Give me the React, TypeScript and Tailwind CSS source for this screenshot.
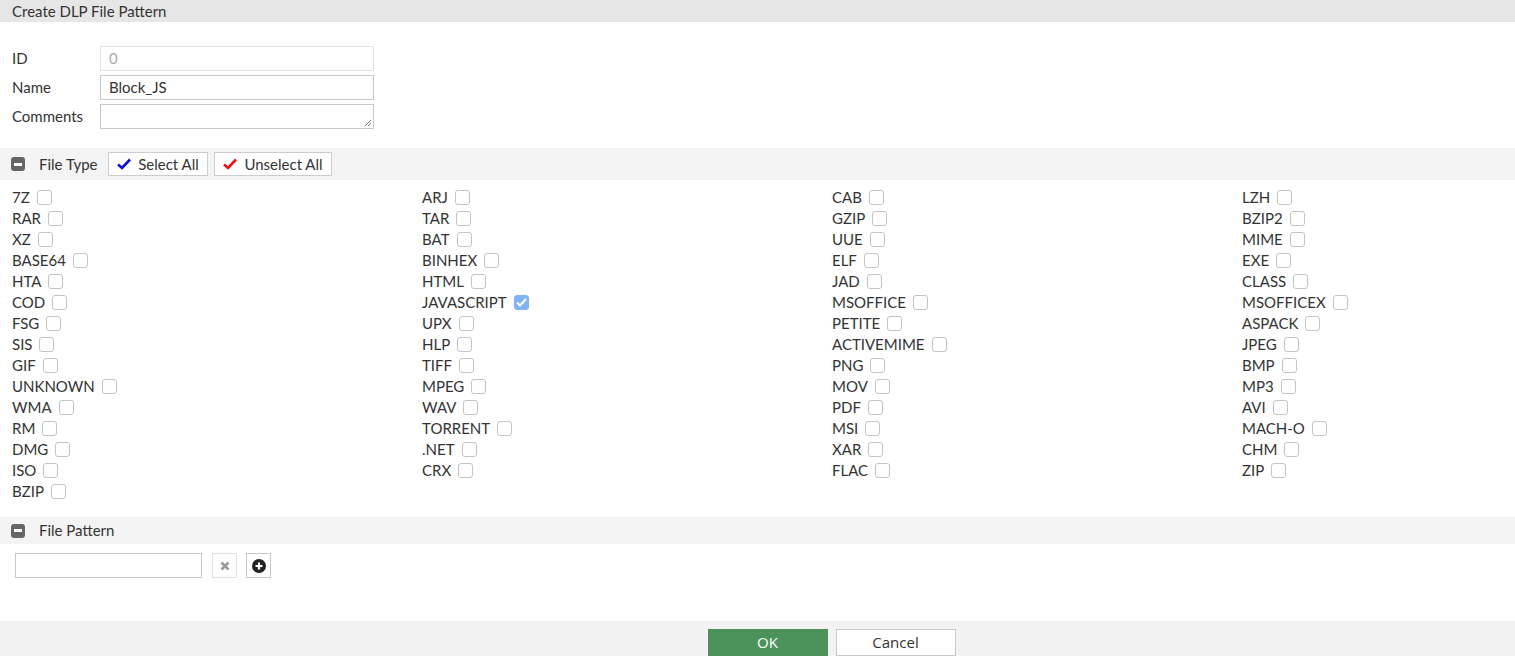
import { useState } from "react";

const fileTypes = [
  "7Z", "ARJ", "CAB", "LZH",
  "RAR", "TAR", "GZIP", "BZIP2",
  "XZ", "BAT", "UUE", "MIME",
  "BASE64", "BINHEX", "ELF", "EXE",
  "HTA", "HTML", "JAD", "CLASS",
  "COD", "JAVASCRIPT", "MSOFFICE", "MSOFFICEX",
  "FSG", "UPX", "PETITE", "ASPACK",
  "SIS", "HLP", "ACTIVEMIME", "JPEG",
  "GIF", "TIFF", "PNG", "BMP",
  "UNKNOWN", "MPEG", "MOV", "MP3",
  "WMA", "WAV", "PDF", "AVI",
  "RM", "TORRENT", "MSI", "MACH-O",
  "DMG", ".NET", "XAR", "CHM",
  "ISO", "CRX", "FLAC", "ZIP",
  "BZIP",
];

function MinusIcon() {
  return (
    <span className="w-[14px] h-[14px] rounded-[3px] bg-[#666] flex items-center justify-center shrink-0">
      <span className="w-[8px] h-[3px] bg-white" />
    </span>
  );
}

function Check({ color }: { color: string }) {
  return (
    <svg width="14" height="12" viewBox="0 0 14 12">
      <path d="M1 6.5 L5 10 L13 1.5" fill="none" stroke={color} strokeWidth="2.6" strokeLinejoin="miter" />
    </svg>
  );
}

function Box({ checked, onClick }: { checked: boolean; onClick: () => void }) {
  return (
    <span
      onClick={onClick}
      className={
        checked
          ? "w-[15px] h-[15px] rounded-[3px] bg-[#7fb5f5] border border-[#7fb5f5] flex items-center justify-center"
          : "w-[15px] h-[15px] rounded-[3px] bg-white border border-[#c4c4c4]"
      }
    >
      {checked && (
        <svg width="11" height="9" viewBox="0 0 11 9">
          <path d="M1 4.5 L4 7.5 L10 1" fill="none" stroke="white" strokeWidth="2" />
        </svg>
      )}
    </span>
  );
}

export default function App() {
  const [checked, setChecked] = useState<string[]>(["JAVASCRIPT"]);
  const toggle = (t: string) =>
    setChecked((c) => (c.includes(t) ? c.filter((x) => x !== t) : [...c, t]));

  return (
    <div className="h-[656px] flex flex-col bg-white text-[#333] text-[15px] font-['Lato','Liberation_Sans',sans-serif] overflow-hidden">
      {/* title */}
      <div className="h-[22px] bg-[#e6e6e6] px-3 flex items-center text-[#333] leading-none">
        Create DLP File Pattern
      </div>

      <div className="flex-1">
        {/* form */}
        <div className="pt-[24px] px-3 flex flex-col gap-[4px]">
          <div className="flex items-center">
            <span className="w-[88px]">ID</span>
            <div className="w-[274px] h-[25px] border border-[#e4e4e4] px-2 flex items-center text-[#aaa]">0</div>
          </div>
          <div className="flex items-center">
            <span className="w-[88px]">Name</span>
            <div className="w-[274px] h-[25px] border border-[#c8c8c8] px-2 flex items-center">Block_JS</div>
          </div>
          <div className="flex items-center">
            <span className="w-[88px]">Comments</span>
            <div className="w-[274px] h-[25px] border border-[#c8c8c8] relative">
              <svg className="absolute right-[1px] bottom-[1px]" width="8" height="8" viewBox="0 0 8 8">
                <path d="M7 1 L1 7 M7 4 L4 7" stroke="#777" strokeWidth="1" />
              </svg>
            </div>
          </div>
        </div>

        {/* file type */}
        <div className="mt-[19px] h-[32px] bg-[#f4f4f4] pl-[11px] flex items-center">
          <MinusIcon />
          <span className="ml-[14px] w-[69px] whitespace-nowrap">File Type</span>
          <button className="h-[24px] w-[100px] bg-white border border-[#ccc] flex items-center justify-center gap-[7px]">
            <Check color="#0b0be6" />
            <span>Select All</span>
          </button>
          <button className="ml-[6px] h-[24px] w-[118px] bg-white border border-[#ccc] flex items-center justify-center gap-[7px]">
            <Check color="#ee1111" />
            <span>Unselect All</span>
          </button>
        </div>

        <div className="pt-[7px] px-3 grid grid-cols-[repeat(4,410px)]">
          {fileTypes.map((t) => (
            <div key={t} className="h-[21px] flex items-center gap-[7px]">
              <span>{t}</span>
              <Box checked={checked.includes(t)} onClick={() => toggle(t)} />
            </div>
          ))}
        </div>

        {/* file pattern */}
        <div className="mt-[15px] h-[27px] bg-[#f4f4f4] pl-[11px] flex items-center">
          <MinusIcon />
          <span className="ml-[14px]">File Pattern</span>
        </div>
        <div className="pt-[9px] pl-[15px] flex items-center">
          <div className="w-[187px] h-[25px] border border-[#c8c8c8]" />
          <button className="ml-[10px] w-[25px] h-[25px] border border-[#e0e0e0] flex items-center justify-center">
            <svg width="10" height="10" viewBox="0 0 10 10">
              <path d="M1.5 1.5 L8.5 8.5 M8.5 1.5 L1.5 8.5" stroke="#999" strokeWidth="2.6" />
            </svg>
          </button>
          <button className="ml-[9px] w-[25px] h-[25px] border border-[#c8c8c8] flex items-center justify-center">
            <svg width="14" height="14" viewBox="0 0 14 14">
              <circle cx="7" cy="7" r="7" fill="#222" />
              <path d="M7 3.5 V10.5 M3.5 7 H10.5" stroke="white" strokeWidth="2.2" />
            </svg>
          </button>
        </div>
      </div>

      {/* footer */}
      <div className="h-[35px] bg-[#f2f2f2] pt-[8px] pl-[148px] flex justify-center gap-[8px]">
        <button className="w-[120px] h-[27px] bg-[#4b935a] text-white text-[15px] font-['Open_Sans','Liberation_Sans',sans-serif]">OK</button>
        <button className="w-[120px] h-[27px] bg-white border border-[#c8c8c8] text-[#333] font-['Open_Sans','Liberation_Sans',sans-serif]">Cancel</button>
      </div>
    </div>
  );
}
